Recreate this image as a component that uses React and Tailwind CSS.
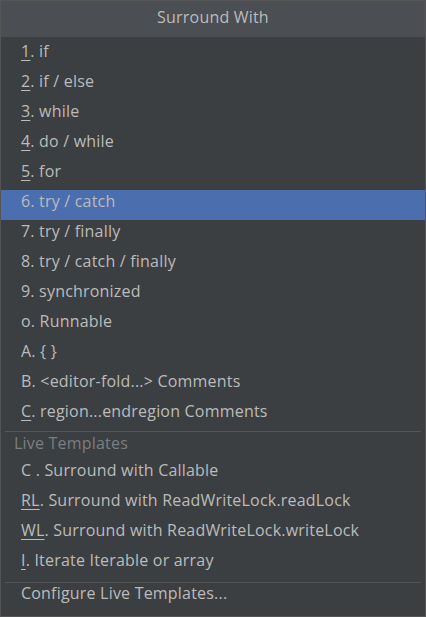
import React from "react";

const items = [
  { key: "1", rest: ". if", u: true },
  { key: "2", rest: ". if / else", u: true },
  { key: "3", rest: ". while", u: true },
  { key: "4", rest: ". do / while", u: true },
  { key: "5", rest: ". for", u: true },
  { key: "6", rest: ". try / catch", selected: true },
  { key: "7", rest: ". try / finally" },
  { key: "8", rest: ". try / catch / finally" },
  { key: "9", rest: ". synchronized" },
  { key: "o", rest: ". Runnable" },
  { key: "A", rest: ". { }" },
  { key: "B", rest: ". <editor-fold...> Comments" },
  { key: "C", rest: ". region...endregion Comments", u: true },
];

const templates = [
  { key: "C", rest: " . Surround with Callable" },
  { key: "RL", rest: ". Surround with ReadWriteLock.readLock", u: true },
  { key: "WL", rest: ". Surround with ReadWriteLock.writeLock", u: true },
  { key: "I", rest: ". Iterate Iterable or array", u: true },
];

function Row({ item }) {
  return (
    <div
      className={`h-[30px] flex items-center pl-[20px] pb-[8px] whitespace-nowrap ${
        item.selected ? "bg-[#4b6eaf]" : ""
      }`}
    >
      <span className={item.u ? "underline underline-offset-[3px]" : ""}>{item.key}</span>
      <span className="whitespace-pre">{item.rest}</span>
    </div>
  );
}

export default function App() {
  return (
    <div
      className="w-[426px] h-[617px] bg-[#3c3f41] border border-[#555555] text-[#bbbbbb] text-[16px] tracking-[0.2px] flex flex-col"
      style={{ fontFamily: '"Open Sans", "Noto Sans", sans-serif' }}
    >
      <div className="h-[36px] bg-[#4b4e52] flex items-center justify-center pb-[4px]">
        Surround With
      </div>
      <div className="pt-[3px]">
        {items.map((it, i) => (
          <Row key={i} item={it} />
        ))}
      </div>
      <div className="mx-[4px] mt-[1px] border-t border-[#555555]" />
      <div className="h-[21px] flex items-center pl-[13px] text-[#7b7e80]">
        Live Templates
      </div>
      <div className="pt-[6px]">
        {templates.map((it, i) => (
          <Row key={i} item={it} />
        ))}
      </div>
      <div className="mx-[4px] mt-[3px] border-t border-[#555555]" />
      <div className="h-[22px] flex items-center pl-[20px] pb-[2px]">Configure Live Templates...</div>
    </div>
  );
}
